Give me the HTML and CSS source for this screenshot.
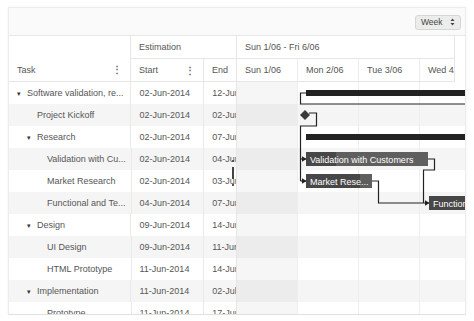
FILE: index.html
```html
<!DOCTYPE html>
<html lang="en">
<head>
  <meta charset="UTF-8">
  <title>Gantt</title>
  <link rel="stylesheet" href="styles.css">
</head>
<body>

  <div class="gantt">
    <div class="toolbar">
      <div class="view-select">Week
        <svg class="updown" width="5" height="8" viewBox="0 0 5 8"><path d="M0.5 3 L2.5 0.5 L4.5 3 Z M0.5 5 L2.5 7.5 L4.5 5 Z" fill="#444"/></svg>
      </div>
    </div>

    <div class="main">
      <!-- left: tree grid -->
      <div class="grid">
        <div class="ghead">
          <div class="hcell col-task">Task <span class="menu">&#8942;</span></div>
          <div class="hgroup">
            <div class="hgroup-title">Estimation</div>
            <div class="hgroup-cols">
              <div class="hcell col-start">Start <span class="menu">&#8942;</span></div>
              <div class="hcell col-end">End</div>
            </div>
          </div>
        </div>

        <div class="grows">
          <div class="grow">
            <div class="cell col-task lvl0"><span class="caret">&#9662;</span>Software validation, re...</div>
            <div class="cell col-start">02-Jun-2014</div>
            <div class="cell col-end">12-Jun-2014</div>
          </div>
          <div class="grow alt">
            <div class="cell col-task lvl1">Project Kickoff</div>
            <div class="cell col-start">02-Jun-2014</div>
            <div class="cell col-end">02-Jun-2014</div>
          </div>
          <div class="grow">
            <div class="cell col-task lvl1"><span class="caret">&#9662;</span>Research</div>
            <div class="cell col-start">02-Jun-2014</div>
            <div class="cell col-end">07-Jun-2014</div>
          </div>
          <div class="grow alt">
            <div class="cell col-task lvl2">Validation with Cu...</div>
            <div class="cell col-start">02-Jun-2014</div>
            <div class="cell col-end">04-Jun-2014</div>
          </div>
          <div class="grow">
            <div class="cell col-task lvl2">Market Research</div>
            <div class="cell col-start">02-Jun-2014</div>
            <div class="cell col-end">03-Jun-2014</div>
          </div>
          <div class="grow alt">
            <div class="cell col-task lvl2">Functional and Te...</div>
            <div class="cell col-start">04-Jun-2014</div>
            <div class="cell col-end">07-Jun-2014</div>
          </div>
          <div class="grow">
            <div class="cell col-task lvl1"><span class="caret">&#9662;</span>Design</div>
            <div class="cell col-start">09-Jun-2014</div>
            <div class="cell col-end">14-Jun-2014</div>
          </div>
          <div class="grow alt">
            <div class="cell col-task lvl2">UI Design</div>
            <div class="cell col-start">09-Jun-2014</div>
            <div class="cell col-end">11-Jun-2014</div>
          </div>
          <div class="grow">
            <div class="cell col-task lvl2">HTML Prototype</div>
            <div class="cell col-start">11-Jun-2014</div>
            <div class="cell col-end">14-Jun-2014</div>
          </div>
          <div class="grow alt">
            <div class="cell col-task lvl1"><span class="caret">&#9662;</span>Implementation</div>
            <div class="cell col-start">11-Jun-2014</div>
            <div class="cell col-end">02-Jul-2014</div>
          </div>
          <div class="grow">
            <div class="cell col-task lvl2">Prototype</div>
            <div class="cell col-start">11-Jun-2014</div>
            <div class="cell col-end">17-Jun-2014</div>
          </div>
        </div>

        <!-- splitter handle -->
        <div class="splitter"><i></i><b></b><i></i></div>
      </div>

      <!-- right: timeline -->
      <div class="chart">
        <div class="chead">
          <div class="chead-title">Sun 1/06 - Fri 6/06</div>
          <div class="chead-days">
            <div class="day">Sun 1/06</div>
            <div class="day">Mon 2/06</div>
            <div class="day">Tue 3/06</div>
            <div class="day">Wed 4/06</div>
          </div>
        </div>

        <div class="cbody">
          <div class="crow"><div class="dc off"></div><div class="dc"></div><div class="dc"></div><div class="dc"></div></div>
          <div class="crow alt"><div class="dc off"></div><div class="dc"></div><div class="dc"></div><div class="dc"></div></div>
          <div class="crow"><div class="dc off"></div><div class="dc"></div><div class="dc"></div><div class="dc"></div></div>
          <div class="crow alt"><div class="dc off"></div><div class="dc"></div><div class="dc"></div><div class="dc"></div></div>
          <div class="crow"><div class="dc off"></div><div class="dc"></div><div class="dc"></div><div class="dc"></div></div>
          <div class="crow alt"><div class="dc off"></div><div class="dc"></div><div class="dc"></div><div class="dc"></div></div>
          <div class="crow"><div class="dc off"></div><div class="dc"></div><div class="dc"></div><div class="dc"></div></div>
          <div class="crow alt"><div class="dc off"></div><div class="dc"></div><div class="dc"></div><div class="dc"></div></div>
          <div class="crow"><div class="dc off"></div><div class="dc"></div><div class="dc"></div><div class="dc"></div></div>
          <div class="crow alt"><div class="dc off"></div><div class="dc"></div><div class="dc"></div><div class="dc"></div></div>
          <div class="crow"><div class="dc off"></div><div class="dc"></div><div class="dc"></div><div class="dc"></div></div>

          <svg class="bars" width="228" height="242" viewBox="0 0 228 242">
            <defs>
              <marker id="arr" markerWidth="5" markerHeight="6" refX="4.5" refY="3" orient="auto" markerUnits="userSpaceOnUse">
                <path d="M0,0 L5,3 L0,6 Z" fill="#222"/>
              </marker>
            </defs>

            <!-- links -->
            <g fill="none" stroke="#222" stroke-width="1.2">
              <path d="M69 11 H63.5 V22 H228"/>
              <path d="M72 31 H79.5 V44 H63.5 V99"/>
              <path d="M63.5 77 H69" marker-end="url(#arr)"/>
              <path d="M63.5 99 H69" marker-end="url(#arr)"/>
              <path d="M191 77 H197.5 V88 H186.5 V121 H192" marker-end="url(#arr)"/>
              <path d="M135 99 H141.5 V121 H186"/>
            </g>

            <!-- summary tasks -->
            <rect x="69" y="8" width="170" height="6" fill="#222"/>
            <rect x="69" y="52" width="170" height="6" fill="#222"/>

            <!-- milestone -->
            <polygon points="68,28 73,33 68,38 63,33" fill="#3a3a3a"/>

            <!-- tasks -->
            <rect x="69" y="70" width="122" height="14" fill="#5f5f5f"/>
            <rect x="69" y="70" width="30" height="14" fill="#474747"/>
            <text x="73" y="80.5" class="bar-label">Validation with Customers</text>

            <rect x="69" y="92" width="66" height="14" fill="#5f5f5f"/>
            <rect x="69" y="92" width="54" height="14" fill="#474747"/>
            <text x="73" y="102.5" class="bar-label">Market Rese...</text>

            <rect x="192" y="114" width="60" height="14" fill="#474747"/>
            <text x="196" y="124.5" class="bar-label">Functional and Te...</text>
          </svg>
        </div>
      </div>
    </div>
  </div>

</body>
</html>
```

FILE: styles.css
```css
body {
  margin: 0;
  background: #fff;
  font-family: "Liberation Sans", Arial, sans-serif;
  font-size: 9px;
  color: #555;
}

.gantt {
  margin: 7px 0 0 8px;
  width: 456px;
  height: 306px;
  border: 1px solid #ececec;
  border-bottom-color: #e0e0e0;
  overflow: hidden;
  box-shadow: 0 0 3px rgba(0, 0, 0, 0.06);
}

/* toolbar */
.toolbar {
  height: 28px;
  box-sizing: border-box;
  background: #fafafa;
  border-bottom: 1px solid #e8e8e8;
  display: flex;
  justify-content: flex-end;
  align-items: center;
  padding-right: 4px;
}

.view-select {
  width: 46px;
  height: 15px;
  box-sizing: border-box;
  margin-top: 1px;
  background: #ececec;
  border: 1px solid #d6d6d6;
  border-radius: 3px;
  display: flex;
  align-items: center;
  justify-content: space-between;
  padding: 0 5px 0 5px;
  color: #444;
  font-size: 8.5px;
}

.main {
  display: flex;
}

/* left grid */
.grid {
  width: 228px;
  flex: none;
  border-right: 1px solid #e6e6e6;
  box-sizing: border-box;
  position: relative;
}

.ghead {
  display: flex;
  height: 46px;
  border-bottom: 1px solid #e6e6e6;
  box-sizing: border-box;
}

.hcell {
  display: flex;
  align-items: center;
  justify-content: space-between;
  box-sizing: border-box;
  padding: 0 8px;
  border-right: 1px solid #e6e6e6;
  white-space: nowrap;
  overflow: hidden;
}

.ghead > .col-task {
  align-items: flex-end;
  padding-bottom: 6px;
}

.menu {
  font-size: 10px;
  color: #666;
  font-weight: bold;
}

.hgroup {
  display: flex;
  flex-direction: column;
}

.hgroup-title {
  height: 23px;
  line-height: 23px;
  padding-left: 8px;
  border-bottom: 1px solid #e6e6e6;
  box-sizing: border-box;
}

.hgroup-cols {
  display: flex;
  height: 22px;
}

.col-task { width: 123px; }
.col-start { width: 73px; }
.col-end { width: 32px; border-right: none !important; padding-right: 0 !important; }

.grow {
  display: flex;
  height: 22px;
  line-height: 22px;
}

.alt {
  background: #f5f5f5;
}

.cell {
  box-sizing: border-box;
  padding-left: 8px;
  border-right: 1px solid #e9e9e9;
  white-space: nowrap;
  overflow: hidden;
}

.lvl0 { padding-left: 8px; }
.lvl1 { padding-left: 28px; }
.lvl2 { padding-left: 38px; }

.caret {
  display: inline-block;
  width: 10px;
  margin-left: -10px;
  font-size: 7px;
  color: #333;
}

.lvl0 .caret {
  margin-left: 0;
}

.splitter {
  position: absolute;
  right: 2px;
  top: 122px;
  display: flex;
  flex-direction: column;
  align-items: center;
}

.splitter i {
  width: 2px;
  height: 2px;
  background: #555;
  margin: 2px 0;
}

.splitter b {
  width: 1.5px;
  height: 12px;
  background: #444;
  margin: 3px 0;
}

/* timeline */
.chart {
  width: 228px;
  flex: none;
  overflow: hidden;
}

.chead {
  width: 218px;
  height: 46px;
  border-bottom: 1px solid #e6e6e6;
  border-right: 1px solid #e6e6e6;
  box-sizing: border-box;
  overflow: hidden;
}

.chead-title {
  height: 23px;
  line-height: 23px;
  padding-left: 8px;
  border-bottom: 1px solid #e6e6e6;
  box-sizing: border-box;
  white-space: nowrap;
}

.chead-days {
  display: flex;
  height: 22px;
  line-height: 22px;
}

.day {
  width: 61px;
  flex: none;
  box-sizing: border-box;
  padding-left: 8px;
  border-right: 1px solid #ececec;
  white-space: nowrap;
}

.cbody {
  position: relative;
}

.crow {
  display: flex;
  height: 22px;
}

.dc {
  width: 61px;
  flex: none;
  box-sizing: border-box;
  border-right: 1px solid #eeeeee;
}

.dc.off {
  background: rgba(0, 0, 0, 0.035);
}

.bars {
  position: absolute;
  left: 0;
  top: 0;
}

.bar-label {
  font-family: "Liberation Sans", Arial, sans-serif;
  font-size: 9px;
  fill: #fff;
}
```
